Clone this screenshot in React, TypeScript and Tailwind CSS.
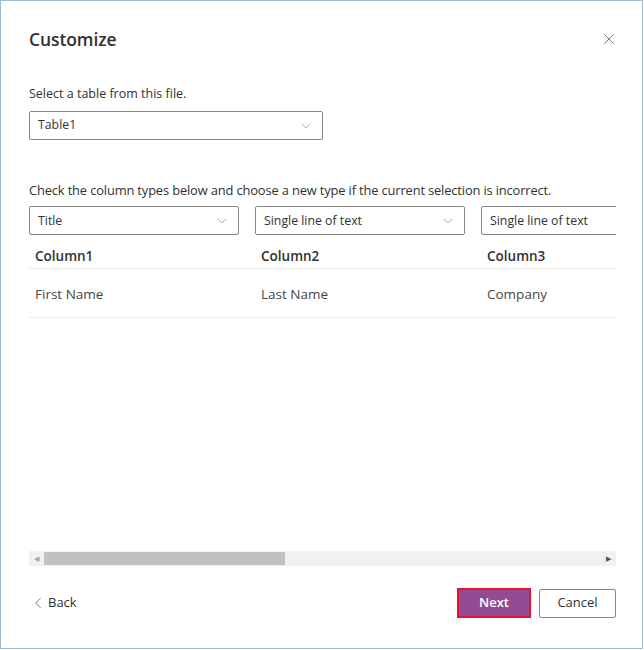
import { ChevronDown, ChevronLeft, X } from "lucide-react";

const columns = [
  { type: "Title", header: "Column1", value: "First Name" },
  { type: "Single line of text", header: "Column2", value: "Last Name" },
  { type: "Single line of text", header: "Column3", value: "Company" },
];

const Dropdown = ({ value, className = "" }: { value: string; className?: string }) => (
  <div
    className={`flex h-[29px] items-center justify-between rounded-[2px] border border-[#8a8886] bg-white pl-[8px] pr-[8px] text-[12.3px] text-[#323130] ${className}`}
  >
    <span>{value}</span>
    <ChevronDown className="h-[16px] w-[16px] text-[#a19f9d]" strokeWidth={1.2} />
  </div>
);

export default function App() {
  return (
    <div
      className="h-[650px] w-[644px] bg-white text-[#323130]"
      style={{ fontFamily: '"Open Sans", "Noto Sans", sans-serif' }}
    >
      <div className="flex h-[649px] w-[643px] flex-col border border-[#9fbad6] bg-white pl-[28px] pr-[26px]">
        <div className="flex items-center justify-between pt-[25px]">
          <h1 className="text-[17.5px] font-semibold tracking-[-0.1px]">Customize</h1>
          <X className="mr-[-2px] h-[18px] w-[18px] text-[#605e5c]" strokeWidth={1.1} />
        </div>

        <p className="mt-[33px] text-[12.5px]">Select a table from this file.</p>
        <Dropdown value="Table1" className="mt-[7px] w-[294px]" />

        <p className="mt-[41px] text-[12.9px] tracking-[-0.15px]">
          Check the column types below and choose a new type if the current selection is incorrect.
        </p>

        <div className="mt-[6px] w-[587px] overflow-hidden">
          <div className="flex w-max gap-[16px]">
            {columns.map((c) => (
              <div key={c.header} className="w-[210px] shrink-0">
                <Dropdown value={c.type} />
              </div>
            ))}
          </div>
          <div className="flex w-max border-b border-[#edebe9]">
            {columns.map((c) => (
              <div key={c.header} className="w-[226px] shrink-0 px-[6px] pb-[1px] pt-[11px] text-[13.5px] font-semibold">
                {c.header}
              </div>
            ))}
          </div>
          <div className="flex w-max border-b border-[#edebe9]">
            {columns.map((c) => (
              <div key={c.header} className="w-[226px] shrink-0 px-[6px] pb-[13px] pt-[15px] text-[13.5px] text-[#484644]">
                {c.value}
              </div>
            ))}
          </div>
        </div>

        <div className="flex-1" />

        <div className="flex h-[15px] w-[587px] items-center bg-[#f1f1f1]">
          <span className="w-[15px] text-center text-[7px] leading-none text-[#a3a3a3]">◀</span>
          <div className="h-[13px] w-[241px] bg-[#c1c1c1]" />
          <div className="flex-1" />
          <span className="w-[15px] text-center text-[7px] leading-none text-[#505050]">▶</span>
        </div>

        <div className="mb-[30px] mt-[22px] flex items-center justify-between">
          <div className="flex items-center gap-[1px] text-[13px] text-[#323130]">
            <ChevronLeft className="h-[18px] w-[18px] text-[#605e5c]" strokeWidth={1.1} />
            <span>Back</span>
          </div>
          <div className="flex items-center gap-[8px]">
            <button className="h-[30px] w-[74px] border-2 border-[#e3132c] bg-[#944b93] text-[13px] font-semibold text-white">
              Next
            </button>
            <button className="h-[29px] w-[77px] rounded-[2px] border border-[#8a8886] bg-white text-[13px] text-[#323130]">
              Cancel
            </button>
          </div>
        </div>
      </div>
    </div>
  );
}
